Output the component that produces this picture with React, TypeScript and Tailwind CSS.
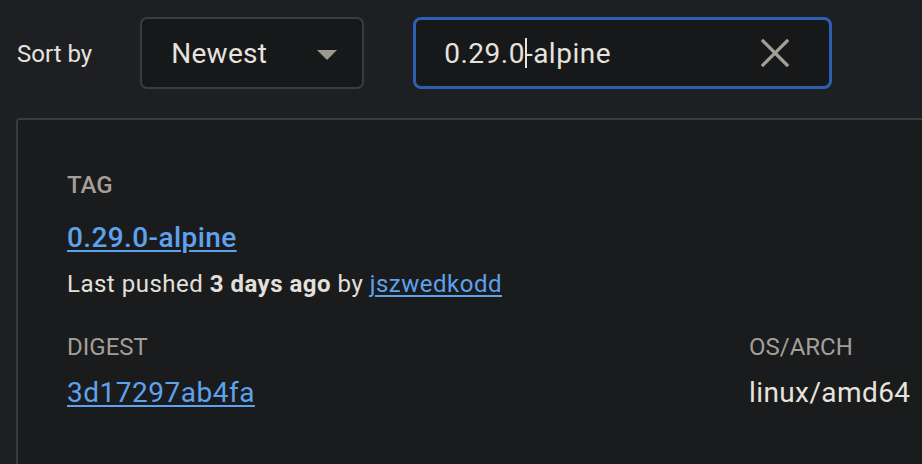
import React from 'react';

const font = { fontFamily: 'Roboto, "Noto Sans", sans-serif' };

const ClearIcon = () => (
  <svg width="28" height="28" viewBox="0 0 28 28" className="shrink-0">
    <path d="M2 2 L26 26 M26 2 L2 26" stroke="#a49f95" strokeWidth="3.2" strokeLinecap="square" />
  </svg>
);

const App: React.FC = () => {
  return (
    <div className="w-[922px] h-[464px] overflow-hidden bg-[#1e1f22] text-[#e3e0db]" style={font}>
      {/* filter bar */}
      <div className="flex items-center pt-[17px] pl-[17px]">
        <span className="text-[24px] leading-[28px] text-[#e6e3de] mt-[2px]">Sort by</span>
        <div className="ml-[48px] w-[224px] h-[72px] flex items-center justify-between rounded-[7px] border-2 border-[#3b3c3f] bg-[#17181a] pl-[29px] pr-[25px]">
          <span className="text-[28px] leading-[33px] tracking-[0.3px] text-[#e6e3de]">Newest</span>
          <span className="w-0 h-0 border-l-[10px] border-r-[10px] border-t-[10px] border-l-transparent border-r-transparent border-t-[#a09a8e] mt-[4px]" />
        </div>
        <div className="ml-[49px] w-[419px] h-[72px] flex items-center justify-between rounded-[8px] border-[3px] border-[#2c5fb2] bg-[#17181a] pl-[28px] pr-[40px]">
          <span className="text-[28px] leading-[33px] tracking-[0.5px] text-[#e6e3de] flex items-center">
            0.29.0
            <span className="inline-block w-[2px] h-[30px] bg-[#e6e3de] -mr-[2px]" />
            -alpine
          </span>
          <ClearIcon />
        </div>
      </div>

      {/* result card */}
      <div className="mt-[29px] ml-[16px] w-[940px] h-[400px] rounded-[4px] border-2 border-[#3a3b3e] bg-[#1a1b1d] pt-[51px] pl-[49px]">
        <div className="text-[24px] leading-[28px] font-medium text-[#a39f98]">TAG</div>
        <a className="mt-[22px] block w-fit text-[28px] leading-[33px] font-medium tracking-[0.4px] text-[#5ea2ee] underline underline-offset-[3px] decoration-[1.5px]">
          0.29.0-alpine
        </a>
        <div className="mt-[16px] text-[24px] leading-[28px] tracking-[0.5px] text-[#e3e0db]">
          Last pushed <span className="font-bold">3 days ago</span> by{' '}
          <a className="text-[#5ea2ee] underline underline-offset-[3px] decoration-[1.5px]">jszwedkodd</a>
        </div>

        <div className="mt-[35px] grid grid-cols-[682px_1fr]">
          <div className="flex flex-col">
            <span className="text-[24px] leading-[28px] text-[#a39f98]">DIGEST</span>
            <a className="mt-[15px] w-fit text-[28px] leading-[33px] tracking-[0.5px] text-[#5ea2ee] underline underline-offset-[3px] decoration-[1.5px]">
              3d17297ab4fa
            </a>
          </div>
          <div className="flex flex-col">
            <span className="text-[24px] leading-[28px] text-[#a39f98]">OS/ARCH</span>
            <span className="mt-[15px] text-[28px] leading-[33px] tracking-[0.4px] text-[#e6e3de]">linux/amd64</span>
          </div>
        </div>
      </div>
    </div>
  );
};

export default App;
